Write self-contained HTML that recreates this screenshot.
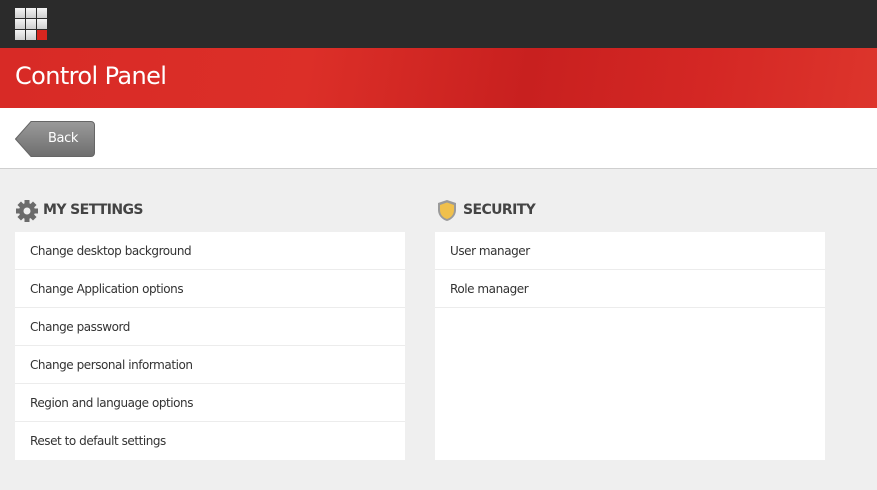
<!DOCTYPE html>
<html><head><style>
*{margin:0;padding:0;box-sizing:border-box}
body{width:877px;height:490px;overflow:hidden;background:#efefef;font-family:"Liberation Sans","DejaVu Sans",sans-serif;position:relative}
.top{position:absolute;left:0;top:0;width:877px;height:48px;background:#2b2b2b}
.logo{position:absolute;left:15px;top:8px;width:33px;height:33px}
.logo div{position:absolute;width:10px;height:10px;background:linear-gradient(#f4f4f4,#cfcfcf)}
.red{position:absolute;left:0;top:48px;width:877px;height:60px;background:linear-gradient(100deg,#d82a26 0%,#dc2f28 35%,#c8201f 60%,#d42724 80%,#dd352c 100%)}
.red h1{position:absolute;left:15px;top:14px;font-size:24px;font-weight:normal;color:#fff;font-family:"DejaVu Sans",sans-serif;letter-spacing:-0.6px}
.wb{position:absolute;left:0;top:108px;width:877px;height:61px;background:#fff;border-bottom:1px solid #cfcfcf}
.back{position:absolute;left:15px;top:13px;width:80px;height:36px}
.back span{position:absolute;left:33px;top:10px;color:#fff;font-size:13px;font-family:"DejaVu Sans",sans-serif;letter-spacing:-0.4px}
h2{position:absolute;top:202px;font-size:14px;font-weight:bold;color:#444;font-family:"DejaVu Sans",sans-serif;letter-spacing:-0.6px}
.card{position:absolute;top:232px;width:390px;height:228px;background:#fff}
.row{height:38px;border-bottom:1px solid #ececec;padding-left:15px;line-height:38px;font-size:12px;color:#333;font-family:"DejaVu Sans",sans-serif;letter-spacing:-0.45px}
</style></head><body>
<div class="top"><div class="logo">
<div style="left:0;top:0"></div><div style="left:11px;top:0"></div><div style="left:22px;top:0"></div>
<div style="left:0;top:11px"></div><div style="left:11px;top:11px"></div><div style="left:22px;top:11px"></div>
<div style="left:0;top:22px"></div><div style="left:11px;top:22px"></div><div style="left:22px;top:22px;background:#d7261f"></div>
</div></div>
<div class="red"><h1>Control Panel</h1></div>
<div class="wb"><div class="back"><svg width="80" height="36"><defs><linearGradient id="g" x1="0" y1="0" x2="0" y2="1"><stop offset="0" stop-color="#9a9a9a"/><stop offset="1" stop-color="#6e6e6e"/></linearGradient></defs><path d="M16 0.5H76a3.5 3.5 0 0 1 3.5 3.5V32a3.5 3.5 0 0 1-3.5 3.5H16L0.5 18Z" fill="url(#g)" stroke="#666"/></svg><span>Back</span></div></div>
<svg style="position:absolute;left:16px;top:200px" width="22" height="22" viewBox="0 0 22 22"><g fill="#6b6b6b" transform="translate(11 11)"><rect x="-2.5" y="-11" width="5" height="22"/><rect x="-2.5" y="-11" width="5" height="22" transform="rotate(45)"/><rect x="-2.5" y="-11" width="5" height="22" transform="rotate(90)"/><rect x="-2.5" y="-11" width="5" height="22" transform="rotate(135)"/><circle r="8"/><circle r="3.5" fill="#efefef"/></g></svg>
<h2 style="left:43px">MY SETTINGS</h2>
<svg style="position:absolute;left:437px;top:199px" width="20" height="23" viewBox="0 0 20 23"><path d="M10 1L19 4V11C19 17 14 21 10 22C6 21 1 17 1 11V4Z" fill="#9a9a9a"/><path d="M10 3.5L17 6V11C17 16 13.5 19 10 20C6.5 19 3 16 3 11V6Z" fill="#f0c04c"/></svg>
<h2 style="left:463px">SECURITY</h2>
<div class="card" style="left:15px">
<div class="row">Change desktop background</div><div class="row">Change Application options</div><div class="row">Change password</div><div class="row">Change personal information</div><div class="row">Region and language options</div><div class="row" style="border:none">Reset to default settings</div>
</div>
<div class="card" style="left:435px">
<div class="row">User manager</div><div class="row">Role manager</div>
</div>
</body></html>
